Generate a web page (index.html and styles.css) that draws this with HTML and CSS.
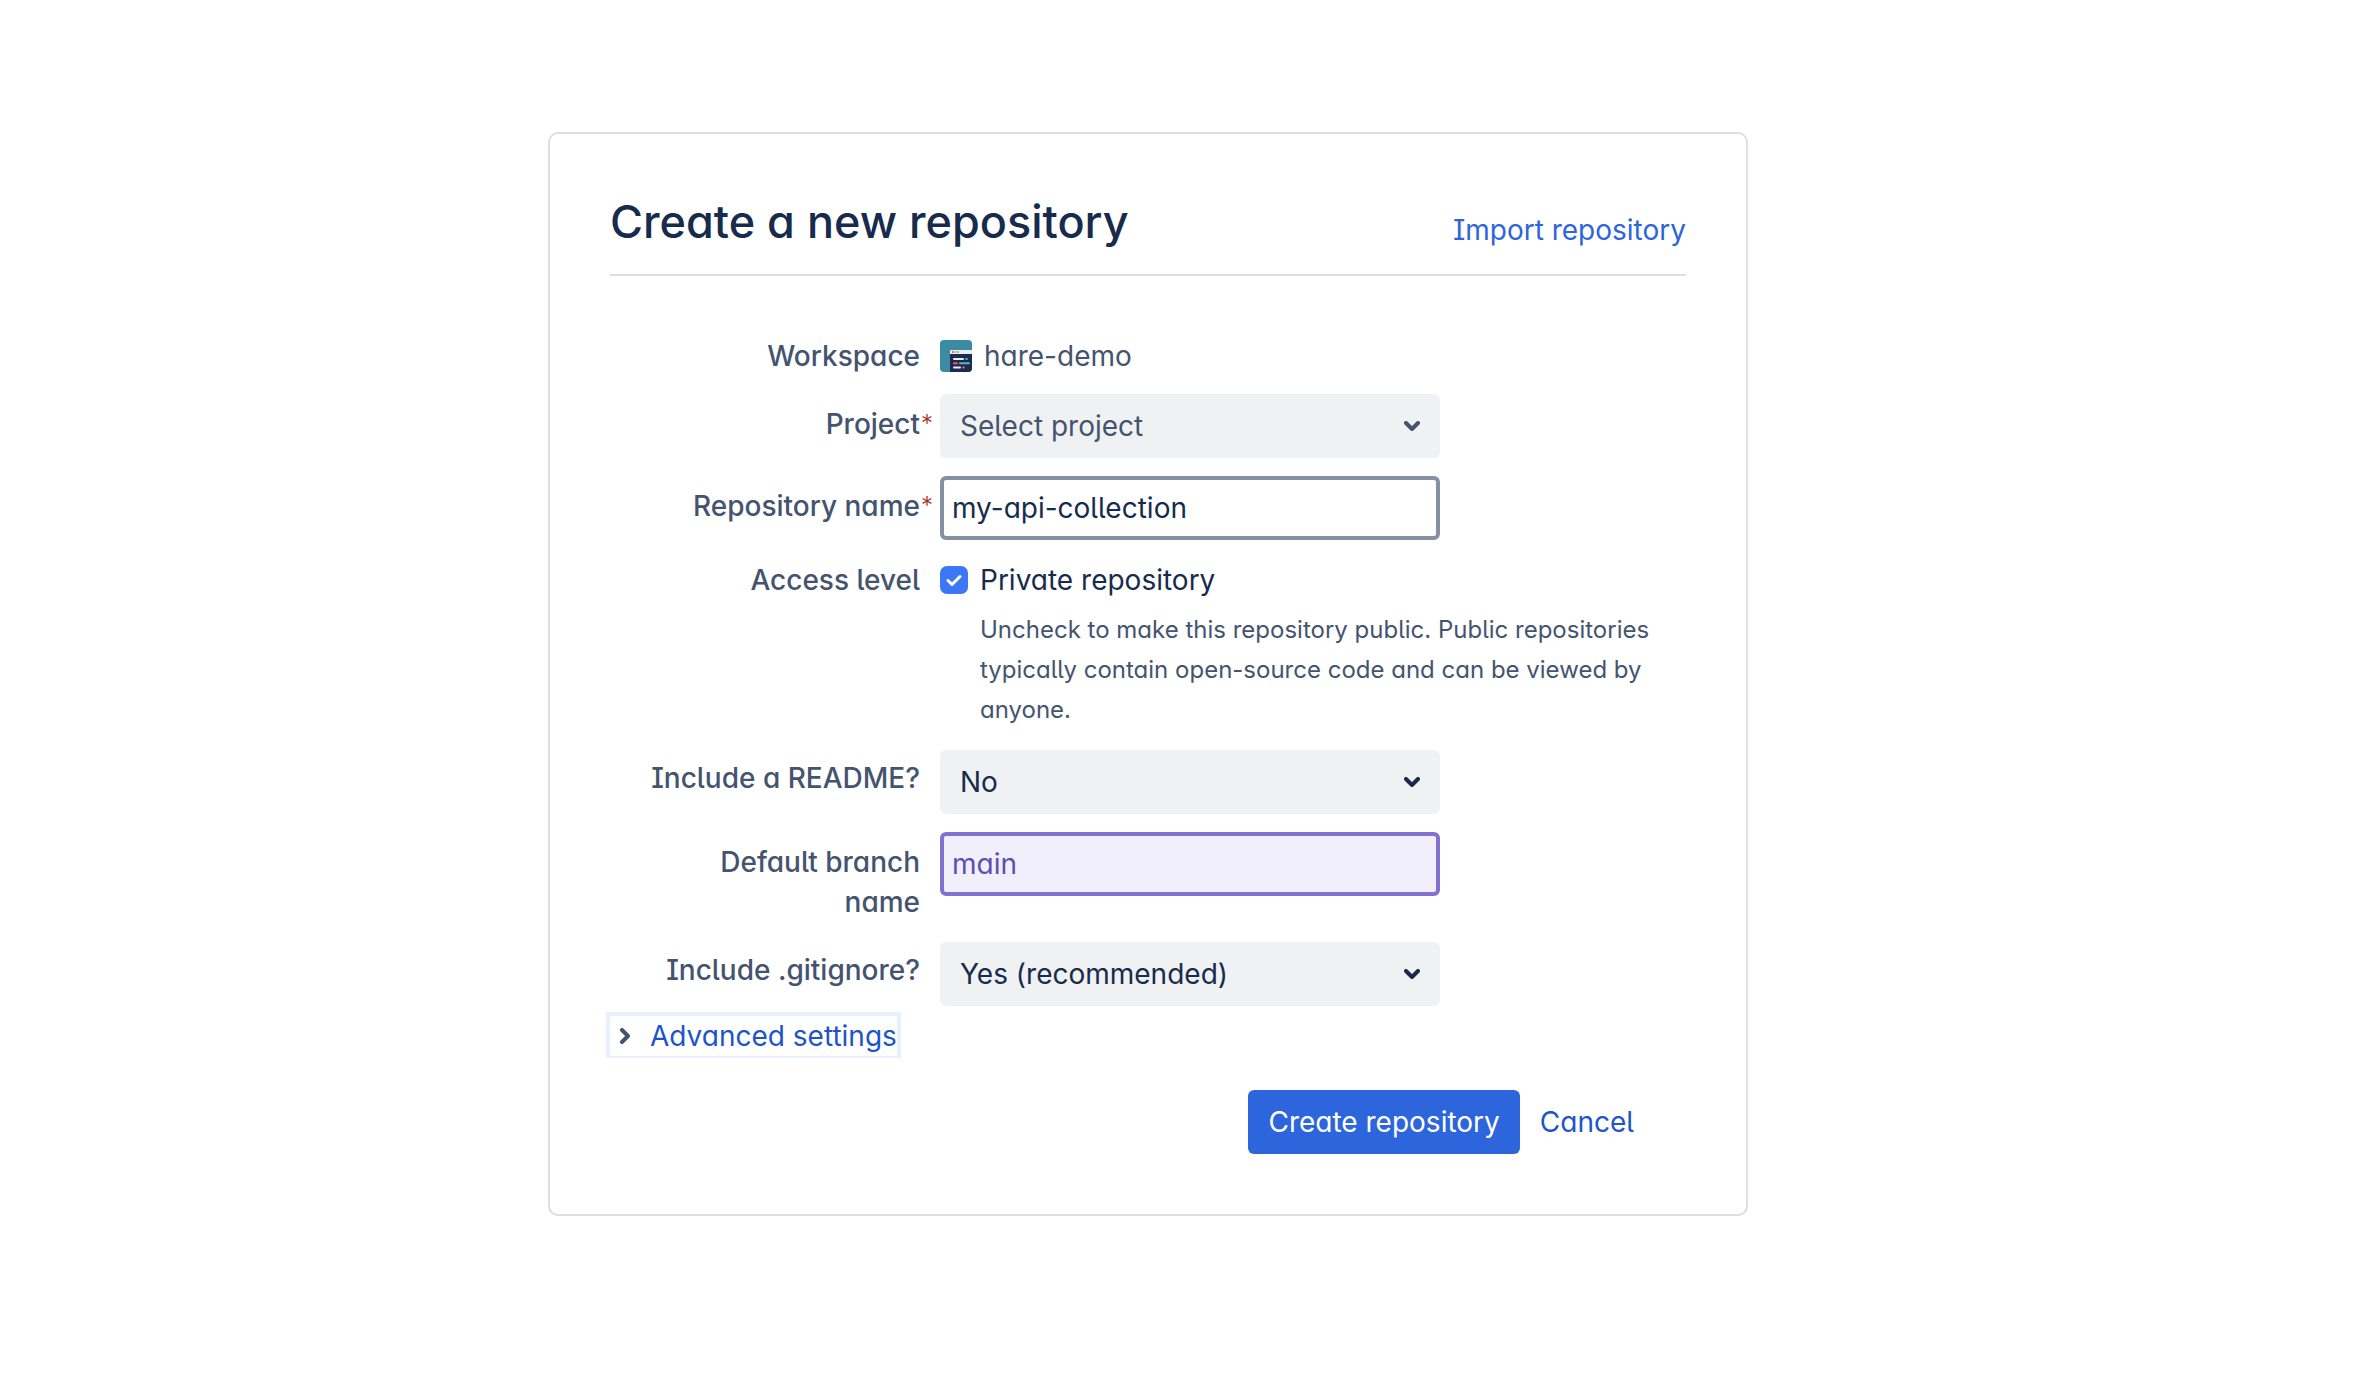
FILE: index.html
```html
<!DOCTYPE html>
<html lang="en">
<head>
  <meta charset="utf-8">
  <meta name="viewport" content="width=device-width, initial-scale=1">
  <title>Create a new repository</title>
  <link rel="stylesheet" href="styles.css">
</head>
<body>
  <main class="page">
    <section class="card">
      <header class="card-header">
        <h1 class="title">Create a new repository</h1>
        <a class="import-link" href="#import">Import repository</a>
      </header>

      <form class="form">
        <div class="row">
          <span class="label">Workspace</span>
          <div class="workspace">
            <svg class="workspace-icon" viewBox="0 0 32 32" aria-hidden="true">
              <rect width="32" height="32" fill="#3b8ba3"/>
              <path d="M10 10h22v22H10z" fill="#1d2b50"/>
              <path d="M10 10h22v4H10z" fill="#e9eef5"/>
              <circle cx="13" cy="12" r="1" fill="#e2483d"/>
              <circle cx="15.500" cy="12" r="1" fill="#e8a33d"/>
              <circle cx="18" cy="12" r="1" fill="#57b894"/>
              <g fill="none" stroke-width="2" stroke-linecap="round">
                <path d="M14 19h9M14 27.500h6" stroke="#e9eef5"/>
                <path d="M26 19h1" stroke="#4c9fe0"/>
                <path d="M14 23.300h3M23 27.500h1" stroke="#f15b50"/>
                <path d="M20 23.300h9" stroke="#5bb8b0"/>
              </g>
            </svg>
            <span>hare-demo</span>
          </div>
        </div>

        <div class="row">
          <label class="label" for="project">Project</label>
          <span class="required" aria-hidden="true">*</span>
          <div class="select select-empty">
            <select id="project" required>
              <option>Select project</option>
            </select>
            <svg class="chevron" viewBox="0 0 16 10" aria-hidden="true"><path d="M2 2l6 6 6-6"/></svg>
          </div>
        </div>

        <div class="row">
          <label class="label" for="name">Repository name</label>
          <span class="required" aria-hidden="true">*</span>
          <input class="text-field" id="name" type="text" value="my-api-collection" required>
        </div>

        <div class="row row-access">
          <span class="label">Access level</span>
          <div class="access">
            <div class="check">
              <input class="check-input" id="private" type="checkbox" checked aria-describedby="private-help">
              <svg class="check-mark" viewBox="0 0 28 28" aria-hidden="true"><path d="M8 14.500l4 4 8-8"/></svg>
            </div>
            <label class="check-label" for="private">Private repository</label>
            <p class="help" id="private-help">Uncheck to make this repository public. Public repositories typically contain open-source code and can be viewed by anyone.</p>
          </div>
        </div>

        <div class="row row-option">
          <label class="label" for="readme">Include a README?</label>
          <div class="select">
            <select id="readme">
              <option>No</option>
            </select>
            <svg class="chevron" viewBox="0 0 16 10" aria-hidden="true"><path d="M2 2l6 6 6-6"/></svg>
          </div>
        </div>

        <div class="row row-branch">
          <label class="label" for="branch">Default branch name</label>
          <input class="text-field text-field-highlight" id="branch" type="text" value="main">
        </div>

        <div class="row row-option">
          <label class="label" for="gitignore">Include .gitignore?</label>
          <div class="select">
            <select id="gitignore">
              <option>Yes (recommended)</option>
            </select>
            <svg class="chevron" viewBox="0 0 16 10" aria-hidden="true"><path d="M2 2l6 6 6-6"/></svg>
          </div>
        </div>

        <button class="advanced" type="button" aria-expanded="false">
          <svg class="advanced-icon" viewBox="0 0 10 16" aria-hidden="true"><path d="M2 2l6 6-6 6"/></svg>
          <span>Advanced settings</span>
        </button>

        <div class="actions">
          <button class="button button-primary" type="submit">Create repository</button>
          <a class="button button-link" href="#cancel">Cancel</a>
        </div>
      </form>
    </section>
  </main>
</body>
</html>
```
FILE: styles.css
```css
:root {
  --text: #172b4d;
  --text-subtle: #44546f;
  --border: #dddee3;
  --field: #f0f1f3;
  --blue: #2c65dc;
  --blue-dark: #1d55c9;
}

*,
*::before,
*::after {
  box-sizing: border-box;
}

body {
  margin: 0;
  background: #fff;
  color: var(--text);
  font-family: Inter, "Liberation Sans", sans-serif;
  font-size: 28px;
  line-height: 40px;
  /* single-storey a, tailed l, serifed capital I */
  font-feature-settings: "cv11", "cv05", "cv08";
}

a {
  text-decoration: none;
}

button,
input,
select {
  margin: 0;
  color: inherit;
  font: inherit;
  font-feature-settings: inherit;
}

.page {
  padding: 132px 72px 132px 0;
}

.card {
  max-width: 1200px;
  margin: 0 auto;
  padding: 60px;
  border: 2px solid var(--border);
  border-radius: 10px;
}

.card-header {
  display: flex;
  align-items: flex-end;
  justify-content: space-between;
  margin-bottom: 60px;
  padding-bottom: 24px;
  border-bottom: 2px solid var(--border);
}

.title {
  margin: 0;
  font-size: 45px;
  font-weight: 500;
  line-height: 56px;
}

.import-link {
  color: var(--blue);
}

.form {
  display: flex;
  flex-direction: column;
  gap: 18px;
}

.row {
  display: grid;
  grid-template-columns: 310px 20px minmax(0, 1fr);
  align-items: start;
}

.row > :last-child {
  grid-column: 3;
}

.label {
  justify-self: end;
  max-width: 280px;
  color: var(--text-subtle);
  font-weight: 500;
  text-align: right;
}

label.label,
.required {
  padding-top: 10px;
}

.row-option label.label {
  padding-top: 8px;
}

.required {
  padding-left: 1px;
  color: #ae2e24;
  font-size: 24px;
  font-weight: 300;
}

.workspace {
  display: flex;
  align-items: center;
  gap: 12px;
  color: var(--text-subtle);
}

.workspace-icon {
  width: 32px;
  height: 32px;
  border-radius: 4px;
}

.select {
  display: grid;
  align-items: center;
  max-width: 500px;
}

.select select,
.chevron {
  grid-area: 1 / 1;
}

.select select {
  width: 100%;
  height: 64px;
  padding: 0 48px 0 20px;
  border: 0;
  border-radius: 6px;
  background: var(--field);
  appearance: none;
}

.select-empty {
  color: var(--text-subtle);
}

.chevron {
  justify-self: end;
  width: 16px;
  height: 10px;
  margin-right: 20px;
  pointer-events: none;
}

.chevron path,
.advanced-icon path,
.check-mark path {
  fill: none;
  stroke: currentColor;
  stroke-width: 4;
  stroke-linecap: round;
  stroke-linejoin: round;
}

.text-field {
  width: 100%;
  max-width: 500px;
  height: 64px;
  padding: 0 8px;
  border: 4px solid #8590a2;
  border-radius: 6px;
  background: #fff;
}

.text-field-highlight {
  border-color: #8270d2;
  background: #f2effd;
  color: #5e4db2;
}

.row-access {
  padding: 2px 0;
}

.access {
  display: grid;
  grid-template-columns: 28px minmax(0, 1fr);
  column-gap: 12px;
  align-items: center;
}

.check {
  display: grid;
}

.check-input,
.check-mark {
  grid-area: 1 / 1;
  width: 28px;
  height: 28px;
}

.check-input {
  border-radius: 7px;
  background: #3c78f5;
  appearance: none;
}

.check-mark {
  color: #fff;
  pointer-events: none;
}

.check-mark path {
  stroke-width: 3;
}

.help {
  grid-column: 2;
  margin: 10px 0 0;
  color: var(--text-subtle);
  font-size: 24px;
}

.row-branch {
  padding-bottom: 2px;
}

.advanced {
  display: flex;
  align-items: center;
  align-self: flex-start;
  gap: 20px;
  margin: -12px -4px 0;
  padding: 0 0 0 10px;
  border: 4px solid #e9f0fe;
  border-bottom-width: 2px;
  background: none;
  color: var(--blue-dark);
}

.advanced-icon {
  width: 10px;
  height: 16px;
  color: var(--text-subtle);
}

.actions {
  display: flex;
  justify-content: flex-end;
  margin-top: 14px;
  padding-right: 32px;
}

.button {
  height: 64px;
  padding: 0 20px;
  border: 0;
  border-radius: 6px;
  line-height: 64px;
}

.button-primary {
  background: var(--blue);
  color: #fff;
}

.button-link {
  color: var(--blue-dark);
}
```
